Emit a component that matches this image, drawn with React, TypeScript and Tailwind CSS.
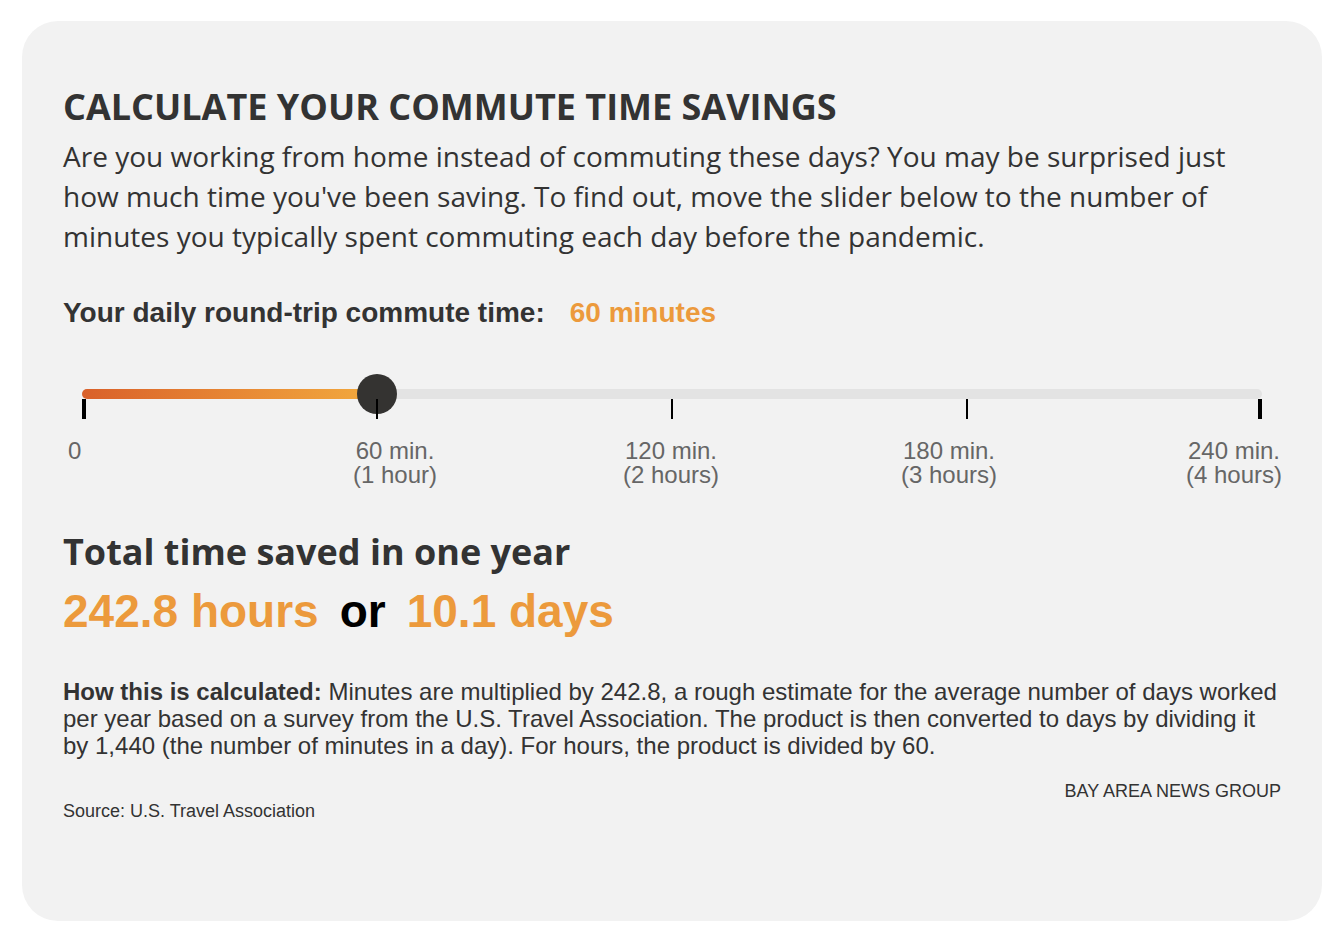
import { useState } from "react";

const TICKS = [0, 60, 120, 180, 240];

// axis labels sit on the scale at the offsets the original graphic uses
const LABELS = [
  { left: 5, top: "0", bottom: "" },
  { left: 290, top: "60 min.", bottom: "(1 hour)" },
  { left: 560, top: "120 min.", bottom: "(2 hours)" },
  { left: 838, top: "180 min.", bottom: "(3 hours)" },
  { left: 1123, top: "240 min.", bottom: "(4 hours)" },
];

export default function App() {
  const [minutes] = useState(60);

  const days = 242.8;
  const hours = ((minutes * days) / 60).toFixed(1);
  const totalDays = ((minutes * days) / 1440).toFixed(1);
  const pct = (minutes / 240) * 100;

  return (
    <div className="min-h-screen bg-white pl-[22px] pr-[17px] pt-[21px] pb-[20px]">
      <div className="rounded-[36px] bg-[#f2f2f2] px-[41px] pt-[64px] pb-[101px] text-[#333]">
        <h1 className="font-['Open_Sans',sans-serif] text-[36px] font-bold leading-[44px] uppercase">
          Calculate your commute time savings
        </h1>
        <p className="mt-[7px] font-['Open_Sans',sans-serif] text-[28px] leading-[40px]">
          Are you working from home instead of commuting these days? You may be surprised just
          how much time you've been saving. To find out, move the slider below to the number of
          minutes you typically spent commuting each day before the pandemic.
        </p>

        <div className="mt-[41px] flex items-center gap-[25px] font-['Liberation_Sans',Arial,sans-serif] text-[28px] font-bold leading-[32px]">
          <span>Your daily round-trip commute time:</span>
          <span className="text-[#ec9a3c]">{minutes} minutes</span>
        </div>

        {/* slider */}
        <div className="mt-[45px] px-[19px]">
          <div className="relative h-[40px]">
            <div className="absolute left-0 right-0 top-[15px] h-[10px] rounded-full bg-[#e3e3e3]" />
            <div
              className="absolute left-0 top-[15px] h-[10px] rounded-full bg-gradient-to-r from-[#d9602a] to-[#f2aa3e]"
              style={{ width: `${pct}%` }}
            />
            {TICKS.map((t, i) => (
              <div
                key={t}
                className={`absolute top-[25px] h-[20px] -translate-x-1/2 bg-black ${i === 0 || i === TICKS.length - 1 ? "w-[4px]" : "w-[2px]"}`}
                style={{ left: `calc(${(t / 240) * 100}% + ${i === 0 ? 2 : i === TICKS.length - 1 ? -2 : 0}px)` }}
              />
            ))}
            <div
              className="absolute top-0 h-[40px] w-[40px] -translate-x-1/2 rounded-full bg-[#343331]"
              style={{ left: `${pct}%` }}
            />
            <div
              className="absolute top-[25px] h-[20px] w-[2px] -translate-x-1/2 bg-black"
              style={{ left: `${pct}%` }}
            />
          </div>
        </div>

        <div className="relative mt-[25px] h-[48px] font-['Liberation_Sans',Arial,sans-serif] text-[24px] leading-[24px] text-[#666]">
          {LABELS.map((l) => (
            <div key={l.top} className="absolute top-0 whitespace-nowrap text-center" style={{ left: l.left }}>
              <div>{l.top}</div>
              {l.bottom && <div>{l.bottom}</div>}
            </div>
          ))}
        </div>

        <h2 className="mt-[43px] font-['Open_Sans',sans-serif] text-[36px] font-bold leading-[44px]">
          Total time saved in one year
        </h2>
        <div className="mt-[10px] flex items-baseline gap-[21px] font-['Liberation_Sans',Arial,sans-serif] text-[46px] font-bold leading-[54px]">
          <span className="text-[#ec9a3c]">{hours} hours</span>
          <span className="text-black">or</span>
          <span className="text-[#ec9a3c]">{totalDays} days</span>
        </div>

        <p className="mt-[40px] font-['Liberation_Sans',Arial,sans-serif] text-[24px] leading-[27px]">
          <b>How this is calculated:</b> Minutes are multiplied by 242.8, a rough estimate for the
          average number of days worked per year based on a survey from the U.S. Travel Association.
          The product is then converted to days by dividing it by 1,440 (the number of minutes in a
          day). For hours, the product is divided by 60.
        </p>

        <div className="mt-[21px] text-right font-['Liberation_Sans',Arial,sans-serif] text-[18px] leading-[22px]">
          BAY AREA NEWS GROUP
        </div>
        <div className="font-['Liberation_Sans',Arial,sans-serif] text-[18px] leading-[18px]">
          Source: U.S. Travel Association
        </div>
      </div>
    </div>
  );
}
